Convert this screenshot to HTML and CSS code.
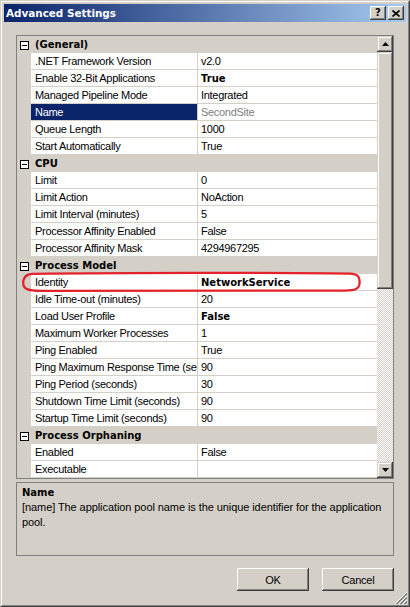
FILE: index.html
```html
<!DOCTYPE html>
<html>
<head>
<meta charset="utf-8">
<link rel="stylesheet" href="styles.css">
</head>
<body>
<div class="window">
  <div class="titlebar">
    <span class="title">Advanced Settings</span>
    <div class="tb-buttons">
      <span class="tbtn q">?</span>
      <span class="tbtn"><svg width="8" height="7" viewBox="0 0 8 7"><path d="M0.5 0.5 L7.5 6.5 M7.5 0.5 L0.5 6.5" stroke="#000" stroke-width="1.6" fill="none"/></svg></span>
    </div>
  </div>
  <div class="content">
    <div class="grid">
      <div class="rows">
        <div class="cat"><span class="gutter"><span class="minus"></span></span><span class="cat-label">(General)</span></div>
        <div class="row"><span class="gutter"></span><span class="name">.NET Framework Version</span><span class="val">v2.0</span></div>
        <div class="row"><span class="gutter"></span><span class="name">Enable 32-Bit Applications</span><span class="val b">True</span></div>
        <div class="row"><span class="gutter"></span><span class="name">Managed Pipeline Mode</span><span class="val">Integrated</span></div>
        <div class="row"><span class="gutter"></span><span class="name selected">Name</span><span class="val muted">SecondSite</span></div>
        <div class="row"><span class="gutter"></span><span class="name">Queue Length</span><span class="val">1000</span></div>
        <div class="row"><span class="gutter"></span><span class="name">Start Automatically</span><span class="val">True</span></div>
        <div class="cat"><span class="gutter"><span class="minus"></span></span><span class="cat-label">CPU</span></div>
        <div class="row"><span class="gutter"></span><span class="name">Limit</span><span class="val">0</span></div>
        <div class="row"><span class="gutter"></span><span class="name">Limit Action</span><span class="val">NoAction</span></div>
        <div class="row"><span class="gutter"></span><span class="name">Limit Interval (minutes)</span><span class="val">5</span></div>
        <div class="row"><span class="gutter"></span><span class="name">Processor Affinity Enabled</span><span class="val">False</span></div>
        <div class="row"><span class="gutter"></span><span class="name">Processor Affinity Mask</span><span class="val">4294967295</span></div>
        <div class="cat"><span class="gutter"><span class="minus"></span></span><span class="cat-label">Process Model</span></div>
        <div class="row"><span class="gutter"></span><span class="name">Identity</span><span class="val b">NetworkService</span></div>
        <div class="row"><span class="gutter"></span><span class="name">Idle Time-out (minutes)</span><span class="val">20</span></div>
        <div class="row"><span class="gutter"></span><span class="name">Load User Profile</span><span class="val b">False</span></div>
        <div class="row"><span class="gutter"></span><span class="name">Maximum Worker Processes</span><span class="val">1</span></div>
        <div class="row"><span class="gutter"></span><span class="name">Ping Enabled</span><span class="val">True</span></div>
        <div class="row"><span class="gutter"></span><span class="name">Ping Maximum Response Time (seconds)</span><span class="val">90</span></div>
        <div class="row"><span class="gutter"></span><span class="name">Ping Period (seconds)</span><span class="val">30</span></div>
        <div class="row"><span class="gutter"></span><span class="name">Shutdown Time Limit (seconds)</span><span class="val">90</span></div>
        <div class="row"><span class="gutter"></span><span class="name">Startup Time Limit (seconds)</span><span class="val">90</span></div>
        <div class="cat"><span class="gutter"><span class="minus"></span></span><span class="cat-label">Process Orphaning</span></div>
        <div class="row"><span class="gutter"></span><span class="name">Enabled</span><span class="val">False</span></div>
        <div class="row"><span class="gutter"></span><span class="name">Executable</span><span class="val"></span></div>
      </div>
      <div class="scrollbar">
        <div class="sb-btn"><svg width="7" height="4" viewBox="0 0 7 4"><path d="M3.5 0 L7 4 L0 4 Z" fill="#000"/></svg></div>
        <div class="thumb"></div>
        <div class="track"></div>
        <div class="sb-btn"><svg width="7" height="4" viewBox="0 0 7 4"><path d="M0 0 L7 0 L3.5 4 Z" fill="#000"/></svg></div>
      </div>
    </div>
    <div class="desc">
      <div class="desc-title">Name</div>
      <div class="desc-text">[name] The application pool name is the unique identifier for the application pool.</div>
    </div>
    <div class="actions">
      <button class="btn">OK</button>
      <button class="btn">Cancel</button>
    </div>
  </div>
  <svg class="annotation" width="410" height="607" viewBox="0 0 410 607">
    <path d="M33 273.8 C120 272.6 280 272.4 350 273.6 C358 274 360 277 359.6 283 C359.3 289 355 290.6 345 290.6 L42 290.8 C29 291 23.2 289.5 23.2 283 C23.2 277 26 274 33 273.8 Z" fill="none" stroke="#e3222b" stroke-width="2.3"/>
  </svg>
  <svg class="grip" width="12" height="12" viewBox="0 0 12 12">
    <path d="M0 12 L12 0 M4 12 L12 4 M8 12 L12 8" stroke="#fff" stroke-width="1"/>
    <path d="M1 12 L12 1 M2 12 L12 2 M5 12 L12 5 M6 12 L12 6 M9 12 L12 9 M10 12 L12 10" stroke="#808080" stroke-width="1"/>
  </svg>
</div>
</body>
</html>
```

FILE: styles.css
```css
html, body {
  margin: 0;
  padding: 0;
  background: #d4d0c8;
}
body {
  font-family: "Liberation Sans", Arial, sans-serif;
  font-size: 11px;
  color: #000;
}
.window {
  position: relative;
  width: 410px;
  height: 607px;
  box-sizing: border-box;
  background: #d4d0c8;
  border-top: 1px solid #d4d0c8;
  border-left: 1px solid #d4d0c8;
  border-right: 1px solid #404040;
  border-bottom: 1px solid #404040;
  overflow: hidden;
}
.window::before {
  content: "";
  position: absolute;
  inset: 0;
  border-top: 1px solid #fff;
  border-left: 1px solid #fff;
  border-right: 1px solid #808080;
  border-bottom: 1px solid #808080;
  pointer-events: none;
}
.titlebar {
  margin: 3px 3px 0 3px;
  height: 18px;
  background: linear-gradient(to right, #0a246a, #a6caf0);
  display: flex;
  align-items: center;
  justify-content: space-between;
}
.title {
  color: #fff;
  font-family: "DejaVu Sans", sans-serif;
  font-weight: bold;
  font-size: 10.4px;
  padding-left: 2px;
}
.tb-buttons {
  display: flex;
  gap: 2px;
  margin-right: 2px;
}
.tbtn {
  width: 16px;
  height: 14px;
  box-sizing: border-box;
  background: #d4d0c8;
  box-shadow: inset -1px -1px #404040, inset 1px 1px #fff, inset -2px -2px #808080;
  display: flex;
  align-items: center;
  justify-content: center;
}
.tbtn.q {
  font-family: "DejaVu Sans", sans-serif;
  font-weight: bold;
  font-size: 10px;
  line-height: 12px;
  padding-bottom: 1px;
}
.content {
  padding: 13px 15px 0 15px;
}
.grid {
  height: 444px;
  box-sizing: border-box;
  border: 1px solid #808080;
  display: flex;
  background: #fff;
}
.rows {
  width: 360px;
  display: flex;
  flex-direction: column;
}
.row, .cat {
  display: grid;
  grid-template-columns: 14px 166px 180px;
  height: 17px;
}
.cat {
  background: #d4d0c8;
}
.gutter {
  background: #d4d0c8;
  position: relative;
}
.minus {
  position: absolute;
  left: 3px;
  top: 5px;
  width: 9px;
  height: 9px;
  box-sizing: border-box;
  border: 1px solid #000;
  background: #fff;
}
.minus::after {
  content: "";
  position: absolute;
  left: 1px;
  right: 1px;
  top: 3px;
  height: 1px;
  background: #000;
}
.cat-label {
  grid-column: 2 / 4;
  font-family: "DejaVu Sans", sans-serif;
  font-weight: bold;
  font-size: 10px;
  line-height: 17px;
  padding-left: 4px;
}
.name, .val {
  height: 16px;
  line-height: 17px;
  border-bottom: 1px solid #d4d0c8;
  white-space: nowrap;
  overflow: hidden;
  text-overflow: clip;
  letter-spacing: -0.3px;
}
.name {
  padding-left: 4px;
}
.val {
  border-left: 1px solid #d4d0c8;
  padding-left: 3px;
}
.b {
  font-family: "DejaVu Sans", sans-serif;
  font-weight: bold;
  font-size: 10px;
  letter-spacing: 0;
}
.selected {
  background: #0a246a;
  color: #fff;
}
.muted {
  color: #808080;
}
.scrollbar {
  width: 16px;
  display: flex;
  flex-direction: column;
}
.sb-btn {
  height: 16px;
  background: #d4d0c8;
  box-shadow: inset -1px -1px #404040, inset 1px 1px #d4d0c8, inset -2px -2px #808080, inset 2px 2px #fff;
  display: flex;
  align-items: center;
  justify-content: center;
}
.thumb {
  height: 237px;
  background: #d4d0c8;
  box-shadow: inset -1px -1px #404040, inset 1px 1px #d4d0c8, inset -2px -2px #808080, inset 2px 2px #fff;
}
.track {
  flex: 1;
  background: repeating-conic-gradient(#d4d0c8 0 25%, #fff 0 50%) 0 0 / 2px 2px;
}
.desc {
  margin-top: 3px;
  height: 74px;
  box-sizing: border-box;
  border: 1px solid #808080;
  padding: 2px 5px 0 5px;
  line-height: 15px;
}
.desc-title {
  font-family: "DejaVu Sans", sans-serif;
  font-weight: bold;
  font-size: 10px;
}
.desc-text {
  letter-spacing: -0.08px;
}
.actions {
  margin-top: 12px;
  display: flex;
  justify-content: flex-end;
  gap: 13px;
}
.btn {
  width: 72px;
  height: 23px;
  margin: 0;
  padding: 0;
  border: none;
  background: #d4d0c8;
  box-shadow: inset -1px -1px #404040, inset 1px 1px #fff, inset -2px -2px #808080, inset 2px 2px #d4d0c8;
  font-family: "Liberation Sans", Arial, sans-serif;
  font-size: 11px;
  color: #000;
  letter-spacing: -0.2px;
}
.annotation {
  position: absolute;
  left: -1px;
  top: -1px;
  pointer-events: none;
}
.grip {
  position: absolute;
  right: 2px;
  bottom: 2px;
}
```
